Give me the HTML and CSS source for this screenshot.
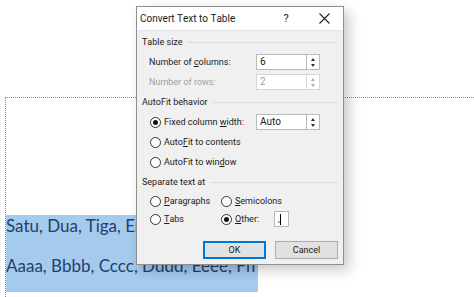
FILE: index.html
```html
<!DOCTYPE html>
<html lang="en">
<head>
    <meta charset="UTF-8">
    <title>Convert Text to Table</title>
    <link rel="stylesheet" href="styles.css">
</head>
<body>
    <!-- Document behind the dialog -->
    <div class="doc">
        <div class="selection">
            <p>Satu, Dua, Tiga, Empat, Lima, Enam</p>
            <p>Aaaa, Bbbb, Cccc, Dddd, Eeee, Fff</p>
        </div>
    </div>

    <!-- Convert Text to Table dialog -->
    <div class="dialog">
        <div class="titlebar">
            <span class="title">Convert Text to Table</span>
            <span class="help">?</span>
            <span class="close">
                <svg width="11" height="11" viewBox="0 0 11 11"><path d="M0.5 0.5L10.5 10.5M10.5 0.5L0.5 10.5" stroke="#222" stroke-width="1.1"/></svg>
            </span>
        </div>
        <div class="content">
            <div class="group-label">Table size</div>
            <div class="row indent">
                <span class="label">Number of <u>c</u>olumns:</span>
                <div class="spin">
                    <span class="field">6</span>
                    <span class="arrows"><i class="up"></i><i class="down"></i></span>
                </div>
            </div>
            <div class="row indent disabled">
                <span class="label">Number of rows:</span>
                <div class="spin">
                    <span class="field">2</span>
                    <span class="arrows"><i class="up"></i><i class="down"></i></span>
                </div>
            </div>

            <div class="group-label">AutoFit behavior</div>
            <div class="row radio-row">
                <span class="radio checked"></span>
                <span class="rlabel wide">Fixed column <u>w</u>idth:</span>
                <div class="spin">
                    <span class="field">Auto</span>
                    <span class="arrows"><i class="up"></i><i class="down"></i></span>
                </div>
            </div>
            <div class="row radio-row">
                <span class="radio"></span>
                <span class="rlabel">Auto<u>F</u>it to contents</span>
            </div>
            <div class="row radio-row">
                <span class="radio"></span>
                <span class="rlabel">AutoFit to win<u>d</u>ow</span>
            </div>

            <div class="group-label">Separate text at</div>
            <div class="sep-grid">
                <div class="cell"><span class="radio"></span><span class="rlabel"><u>P</u>aragraphs</span></div>
                <div class="cell"><span class="radio"></span><span class="rlabel"><u>S</u>emicolons</span></div>
                <div class="cell"><span class="radio"></span><span class="rlabel"><u>T</u>abs</span></div>
                <div class="cell">
                    <span class="radio checked"></span><span class="rlabel"><u>O</u>ther:</span>
                    <span class="other-field">,<b class="caret"></b></span>
                </div>
            </div>

            <div class="buttons">
                <button class="btn default">OK</button>
                <button class="btn">Cancel</button>
            </div>
        </div>
    </div>
</body>
</html>
```

FILE: styles.css
```css
html, body {
    margin: 0;
    padding: 0;
}
body {
    width: 474px;
    height: 297px;
    overflow: hidden;
    background-color: #fff;
    position: relative;
}

/* document */
.doc {
    margin: 97px 0 0 5px;
    height: 200px;
    border-top: 1px dotted #8a8a8a;
    border-left: 1px dotted #8a8a8a;
    padding-top: 117px;
    box-sizing: border-box;
}
.selection {
    width: 252px;
    height: 77px;
    background-color: #a4caee;
    font-family: Lato, "Open Sans", sans-serif;
    font-size: 17px;
    color: #22406a;
}
.selection p {
    margin: 0 0 18px 0;
    height: 22px;
    line-height: 22px;
    white-space: nowrap;
}

/* dialog */
.dialog {
    position: absolute;
    left: 136px;
    top: 6px;
    width: 208px;
    height: 259px;
    box-sizing: border-box;
    border: 1px solid #8e8e8e;
    background-color: #f0f0f0;
    box-shadow: 5px 5px 12px rgba(0, 0, 0, 0.22);
    font-family: Roboto, "Noto Sans", sans-serif;
    font-size: 9px;
    font-kerning: none;
    color: #1a1a1a;
    display: flex;
    flex-direction: column;
}
.titlebar {
    height: 23px;
    background-color: #fff;
    border-bottom: 1px solid #e6e6e6;
    display: flex;
    align-items: center;
    padding-left: 3px;
}
.title {
    font-size: 10px;
}
.help {
    margin-left: auto;
    width: 14px;
    text-align: center;
    font-size: 11px;
}
.close {
    width: 11px;
    height: 11px;
    margin: 0 13px 0 26px;
    display: flex;
}
.content {
    flex: 1;
    display: flex;
    flex-direction: column;
    padding: 1px 5px 5px 5px;
}
.group-label {
    height: 20px;
    display: flex;
    align-items: center;
    gap: 5px;
}
.group-label::after {
    content: "";
    flex: 1;
    border-top: 1px solid #dcdcdc;
}
.row {
    height: 20px;
    display: flex;
    align-items: center;
    white-space: nowrap;
}
.indent {
    padding-left: 7px;
}
.label {
    width: 107px;
}
.disabled {
    color: #a0a0a0;
}

/* spin box */
.spin {
    display: flex;
    height: 16px;
}
.field {
    width: 51px;
    box-sizing: border-box;
    border: 1px solid #b9b9b9;
    background-color: #fff;
    padding-left: 3px;
    line-height: 14px;
    font-size: 10px;
}
.arrows {
    width: 13px;
    box-sizing: border-box;
    border: 1px solid #b9b9b9;
    border-left: none;
    background-color: #fff;
    display: flex;
    flex-direction: column;
    align-items: center;
    justify-content: center;
    gap: 3px;
}
.arrows i {
    width: 0;
    height: 0;
    border-left: 2.5px solid transparent;
    border-right: 2.5px solid transparent;
}
.arrows .up {
    border-bottom: 3px solid #333;
}
.arrows .down {
    border-top: 3px solid #333;
}
.disabled .field,
.disabled .arrows {
    border-color: #d6d6d6;
}
.disabled .arrows .up {
    border-bottom-color: #aaa;
}
.disabled .arrows .down {
    border-top-color: #aaa;
}

/* radio buttons */
.radio-row {
    padding-left: 8px;
}
.radio {
    width: 11px;
    height: 11px;
    box-sizing: border-box;
    border-radius: 50%;
    border: 1px solid #333;
    background-color: #fff;
    display: flex;
    align-items: center;
    justify-content: center;
    flex-shrink: 0;
}
.radio.checked::after {
    content: "";
    width: 5px;
    height: 5px;
    border-radius: 50%;
    background-color: #111;
}
.rlabel {
    margin-left: 3px;
}
.rlabel.wide {
    width: 92px;
}

.sep-grid {
    display: grid;
    grid-template-columns: 71px 1fr;
    grid-auto-rows: 18px;
    padding-left: 8px;
    white-space: nowrap;
}
.cell {
    display: flex;
    align-items: center;
}
.other-field {
    margin-left: 15px;
    width: 15px;
    height: 16px;
    box-sizing: border-box;
    border: 1px solid #b9b9b9;
    background-color: #fff;
    padding-left: 3px;
    display: flex;
    align-items: center;
}
.caret {
    width: 1px;
    height: 11px;
    background-color: #000;
}

/* buttons */
.buttons {
    margin-top: auto;
    display: flex;
    justify-content: flex-end;
    gap: 9px;
}
.btn {
    width: 63px;
    height: 18px;
    box-sizing: border-box;
    font-family: Roboto, "Noto Sans", sans-serif;
    font-size: 9px;
    color: #1a1a1a;
    background-color: #e1e1e1;
    border: 1px solid #adadad;
    padding: 0;
}
.btn.default {
    border: 2px solid #0078d7;
}
```
